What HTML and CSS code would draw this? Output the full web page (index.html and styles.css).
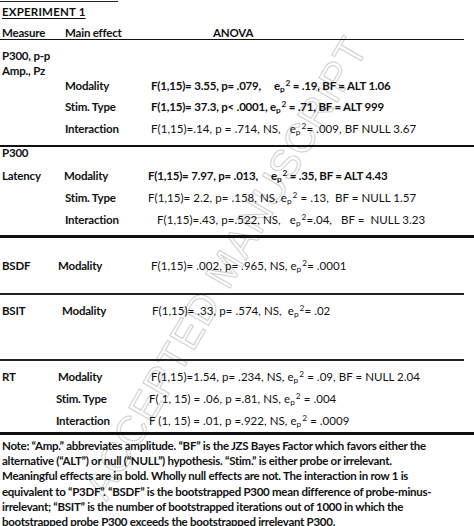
FILE: index.html
```html
<!DOCTYPE html>
<html>
<head>
<meta charset="utf-8">
<link rel="stylesheet" href="styles.css">
</head>
<body>
<div class="watermark">ACCEPTED MANUSCRIPT</div>
<div class="page">
  <div class="topline"></div>
  <div class="title">EXPERIMENT 1</div>
  <div class="row head"><span>Measure</span><span>Main effect</span><span class="anova-h">ANOVA</span></div>

  <div class="block b1">
    <div class="row l15"><span>P300, p-p</span></div>
    <div class="row l15"><span>Amp., Pz</span></div>
    <div class="row l15 gap3"><span></span><span>Modality</span><span class="val strong">F(1,15)= 3.55, p= .079,     e<sub>p</sub><sup>2</sup> = .19, BF = ALT 1.06</span></div>
    <div class="row"><span></span><span>Stim. Type</span><span class="val strong">F(1,15)= 37.3, p&lt; .0001, e<sub>p</sub><sup>2</sup> = .71, BF = ALT 999</span></div>
    <div class="row"><span></span><span>Interaction</span><span class="val">F(1,15)=.14, p = .714, NS,   e<sub>p</sub><sup>2</sup>= .009, BF NULL 3.67</span></div>
  </div>

  <div class="block b2">
    <div class="row l12 gap6"><span>P300</span></div>
    <div class="row"><span>Latency</span><span>Modality</span><span class="val strong">F(1,15)= 7.97, p= .013,     e<sub>p</sub><sup>2</sup> = .35, BF = ALT 4.43</span></div>
    <div class="row"><span></span><span class="nudge">Stim. Type</span><span class="val">F(1,15)= 2.2, p= .158, NS, e<sub>p</sub><sup>2</sup> = .13,  BF = NULL 1.57</span></div>
    <div class="row"><span></span><span class="nudge">Interaction</span><span class="val indent">F(1,15)=.43, p=.522, NS,   e<sub>p</sub><sup>2</sup>=.04,   BF =  NULL 3.23</span></div>
  </div>

  <div class="block b3">
    <div class="row"><span>BSDF</span><span>Modality</span><span class="val">F(1,15)= .002, p= .965, NS, e<sub>p</sub><sup>2</sup>= .0001</span></div>
  </div>

  <div class="block b4">
    <div class="row"><span>BSIT</span><span>Modality</span><span class="val">F(1,15)= .33, p= .574, NS,  e<sub>p</sub><sup>2</sup>= .02</span></div>
  </div>

  <div class="block b5">
    <div class="row"><span>RT</span><span>Modality</span><span class="val">F(1,15)=1.54, p= .234, NS, e<sub>p</sub><sup>2</sup> = .09, BF = NULL 2.04</span></div>
    <div class="row"><span></span><span class="back">Stim. Type</span><span class="val back">F( 1, 15) = .06, p =.81, NS, e<sub>p</sub><sup>2</sup> = .004</span></div>
    <div class="row"><span></span><span class="back">Interaction</span><span class="val back">F (1, 15) = .01, p =.922, NS, e<sub>p</sub><sup>2</sup> = .0009</span></div>
  </div>

  <div class="note">
    <span class="nl">Note: “Amp.” abbreviates amplitude. “BF” is the JZS Bayes Factor which favors either the</span>
    <span class="nl">alternative (“ALT”) or null (“NULL”) hypothesis. “Stim.” is either probe or irrelevant.</span>
    <span class="nl">Meaningful effects are in bold. Wholly null effects are not. The interaction in row 1 is</span>
    <span class="nl">equivalent to “P3DF”. “BSDF” is the bootstrapped P300 mean difference of probe-minus-</span>
    <span class="nl">irrelevant; “BSIT” is the number of bootstrapped iterations out of 1000 in which the</span>
    <span class="nl">bootstrapped probe P300 exceeds the bootstrapped irrelevant P300.</span>
  </div>
</div>
</body>
</html>
```

FILE: styles.css
```css
html {
  background: #fff;
}

body {
  margin: 0;
  padding: 0;
  width: 474px;
  height: 526px;
  overflow: hidden;
  position: relative;
  font-family: Lato, "Open Sans", "Liberation Sans", sans-serif;
  font-size: 11.5px;
  color: #111;
}

.page {
  position: relative;
  z-index: 1;
  width: 474px;
}

.topline {
  margin-top: 1px;
  width: 118px;
  border-top: 1px solid #222;
}

.title {
  margin: 2px 0 0 2px;
  line-height: 15px;
  font-weight: 700;
  text-decoration: underline;
  text-underline-offset: 2px;
  letter-spacing: 0.2px;
}

.row {
  display: grid;
  grid-template-columns: var(--c1, 63px) var(--c2, 86px) 1fr;
  padding-left: 2px;
  line-height: 22px;
  white-space: nowrap;
}

.row > span {
  font-weight: 700;
  letter-spacing: -0.2px;
}

.row > span.val {
  font-weight: 400;
  white-space: pre;
  letter-spacing: 0.05px;
}

.row > span.val.strong {
  font-weight: 700;
  letter-spacing: -0.2px;
}

.head {
  margin-top: 8px;
  width: 462px;
  line-height: 12px;
  border-bottom: 1px solid #111;
}

.anova-h {
  padding-left: 62px;
}

.l15 { line-height: 15px; }
.l12 { line-height: 12px; }
.gap3 { margin-bottom: 3px; }
.gap6 { margin-bottom: 6px; }

.block.b1 {
  padding: 8px 0 5px;
  border-bottom: 2px solid #111;
}

.block.b2 {
  --c1: 62px;
  --c2: 84px;
  padding: 0 0 4px;
  border-bottom: 3px solid #111;
}

.b2 .nudge { padding-left: 1px; }
.b2 .indent { padding-left: 9px; }

.block.b3 {
  --c1: 56px;
  --c2: 93px;
  width: 464px;
  padding: 17px 0 16px;
  border-bottom: 2px solid #222;
}

.block.b4 {
  --c1: 60px;
  --c2: 90px;
  width: 464px;
  padding: 5px 0 37px;
  border-bottom: 2px solid #222;
}

.block.b5 {
  --c1: 56px;
  --c2: 93px;
  padding: 5px 0 0;
  border-bottom: 3px solid #111;
}

.b5 .back { margin-left: -2px; }

sub, sup {
  font-size: 0.72em;
  line-height: 0;
}

sub { vertical-align: -0.25em; }
sup { vertical-align: 0.5em; margin-left: 1px; }

.note {
  padding: 3px 0 0 2px;
  font-weight: 700;
  line-height: 15.2px;
  letter-spacing: -0.28px;
}

.nl {
  display: block;
  white-space: nowrap;
}

.watermark {
  position: absolute;
  left: 226px;
  top: 268px;
  transform: translate(-50%, -50%) rotate(-60deg);
  font-family: "Liberation Sans", Arial, sans-serif;
  font-size: 41px;
  line-height: 41px;
  white-space: nowrap;
  color: transparent;
  -webkit-text-stroke: 1px #d0d0d0;
  letter-spacing: 1px;
  pointer-events: none;
}
```
